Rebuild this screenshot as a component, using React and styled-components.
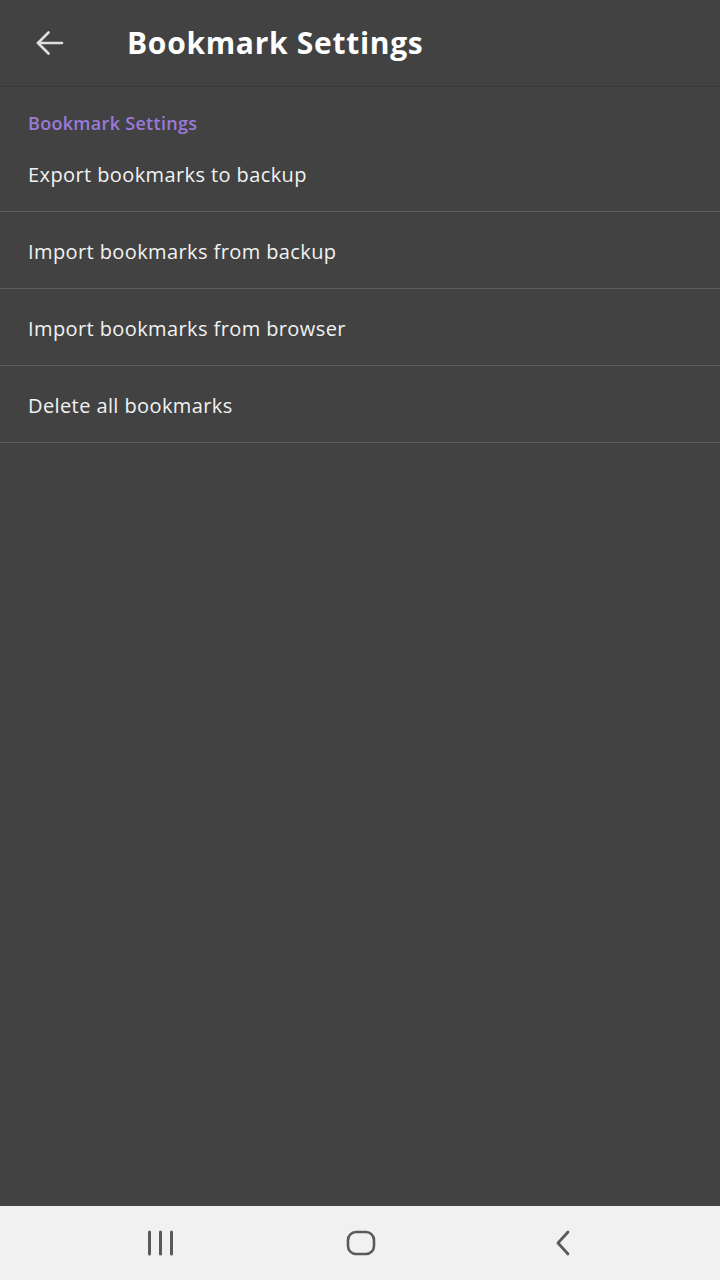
import React from "react";
import styled, { createGlobalStyle } from "styled-components";

const Global = createGlobalStyle`
  html, body { margin: 0; padding: 0; background: #424242; }
  body { font-family: "Open Sans", Roboto, "Liberation Sans", sans-serif; }
  #root { min-height: 100vh; }
`;

const Screen = styled.div`
  width: 720px;
  height: 1280px;
  display: flex;
  flex-direction: column;
  background: #424242;
  overflow: hidden;
`;

const Toolbar = styled.header`
  height: 86px;
  flex: none;
  display: flex;
  align-items: center;
  border-bottom: 1px solid #3a3a3a;
  background: #424242;
`;

const BackButton = styled.button`
  width: 98px;
  height: 86px;
  flex: none;
  display: flex;
  align-items: center;
  justify-content: center;
  padding: 0;
  background: none;
  border: none;
  color: #e0e0e0;
`;

const Title = styled.h1`
  margin: 0 0 0 29px;
  font-size: 30px;
  font-weight: 700;
  letter-spacing: 0.7px;
  color: #ffffff;
  line-height: 1;
`;

const Content = styled.main`
  flex: 1;
  display: flex;
  flex-direction: column;
`;

const Category = styled.div`
  height: 50px;
  box-sizing: border-box;
  padding: 24px 28px 0;
  font-size: 18px;
  line-height: 24px;
  font-weight: 600;
  letter-spacing: 0.3px;
  color: #9a7ad8;
`;

const Row = styled.div`
  display: flex;
  align-items: center;
  padding: ${(p) => (p.$first ? "0" : "2px")} 28px 0;
  height: 74px;
  border-bottom: 1px solid #5c5c5c;
  font-size: 20px;
  letter-spacing: 0.4px;
  color: #f2f2f2;
`;

const NavBar = styled.nav`
  height: 74px;
  flex: none;
  background: #f1f1f1;
  display: grid;
  grid-template-columns: repeat(3, 200px);
  justify-content: center;
  align-items: center;
  justify-items: center;
`;

const NavIcon = styled.span`
  display: flex;
  align-items: center;
  justify-content: center;
  color: #5a5a5a;
  margin-left: ${(p) => p.$shift || 0}px;
`;

const items = [
  "Export bookmarks to backup",
  "Import bookmarks from backup",
  "Import bookmarks from browser",
  "Delete all bookmarks",
];

export default function App() {
  return (
    <>
      <Global />
      <Screen>
        <Toolbar>
          <BackButton aria-label="Back">
            <svg width="30" height="30" viewBox="0 0 30 30" fill="none" stroke="currentColor" strokeWidth="2.6" strokeLinecap="round" strokeLinejoin="round">
              <path d="M28 15H4" />
              <path d="M14.5 4.5L4 15l10.5 10.5" />
            </svg>
          </BackButton>
          <Title>Bookmark Settings</Title>
        </Toolbar>
        <Content>
          <Category>Bookmark Settings</Category>
          {items.map((t, i) => (
            <Row key={t} $first={i === 0}>{t}</Row>
          ))}
        </Content>
        <NavBar>
          <NavIcon $shift={2}>
            <svg width="28" height="26" viewBox="0 0 28 26" fill="none" stroke="currentColor" strokeWidth="3" strokeLinecap="round">
              <path d="M2.5 2v22M13.5 2v22M24.5 2v22" />
            </svg>
          </NavIcon>
          <NavIcon $shift={2}>
            <svg width="30" height="28" viewBox="0 0 30 28" fill="none" stroke="currentColor" strokeWidth="2.6">
              <rect x="2" y="3" width="26" height="22" rx="8" />
            </svg>
          </NavIcon>
          <NavIcon $shift={6}>
            <svg width="20" height="28" viewBox="0 0 20 28" fill="none" stroke="currentColor" strokeWidth="2.8" strokeLinecap="round" strokeLinejoin="round">
              <path d="M15 3L5 14l10 11" />
            </svg>
          </NavIcon>
        </NavBar>
      </Screen>
    </>
  );
}
